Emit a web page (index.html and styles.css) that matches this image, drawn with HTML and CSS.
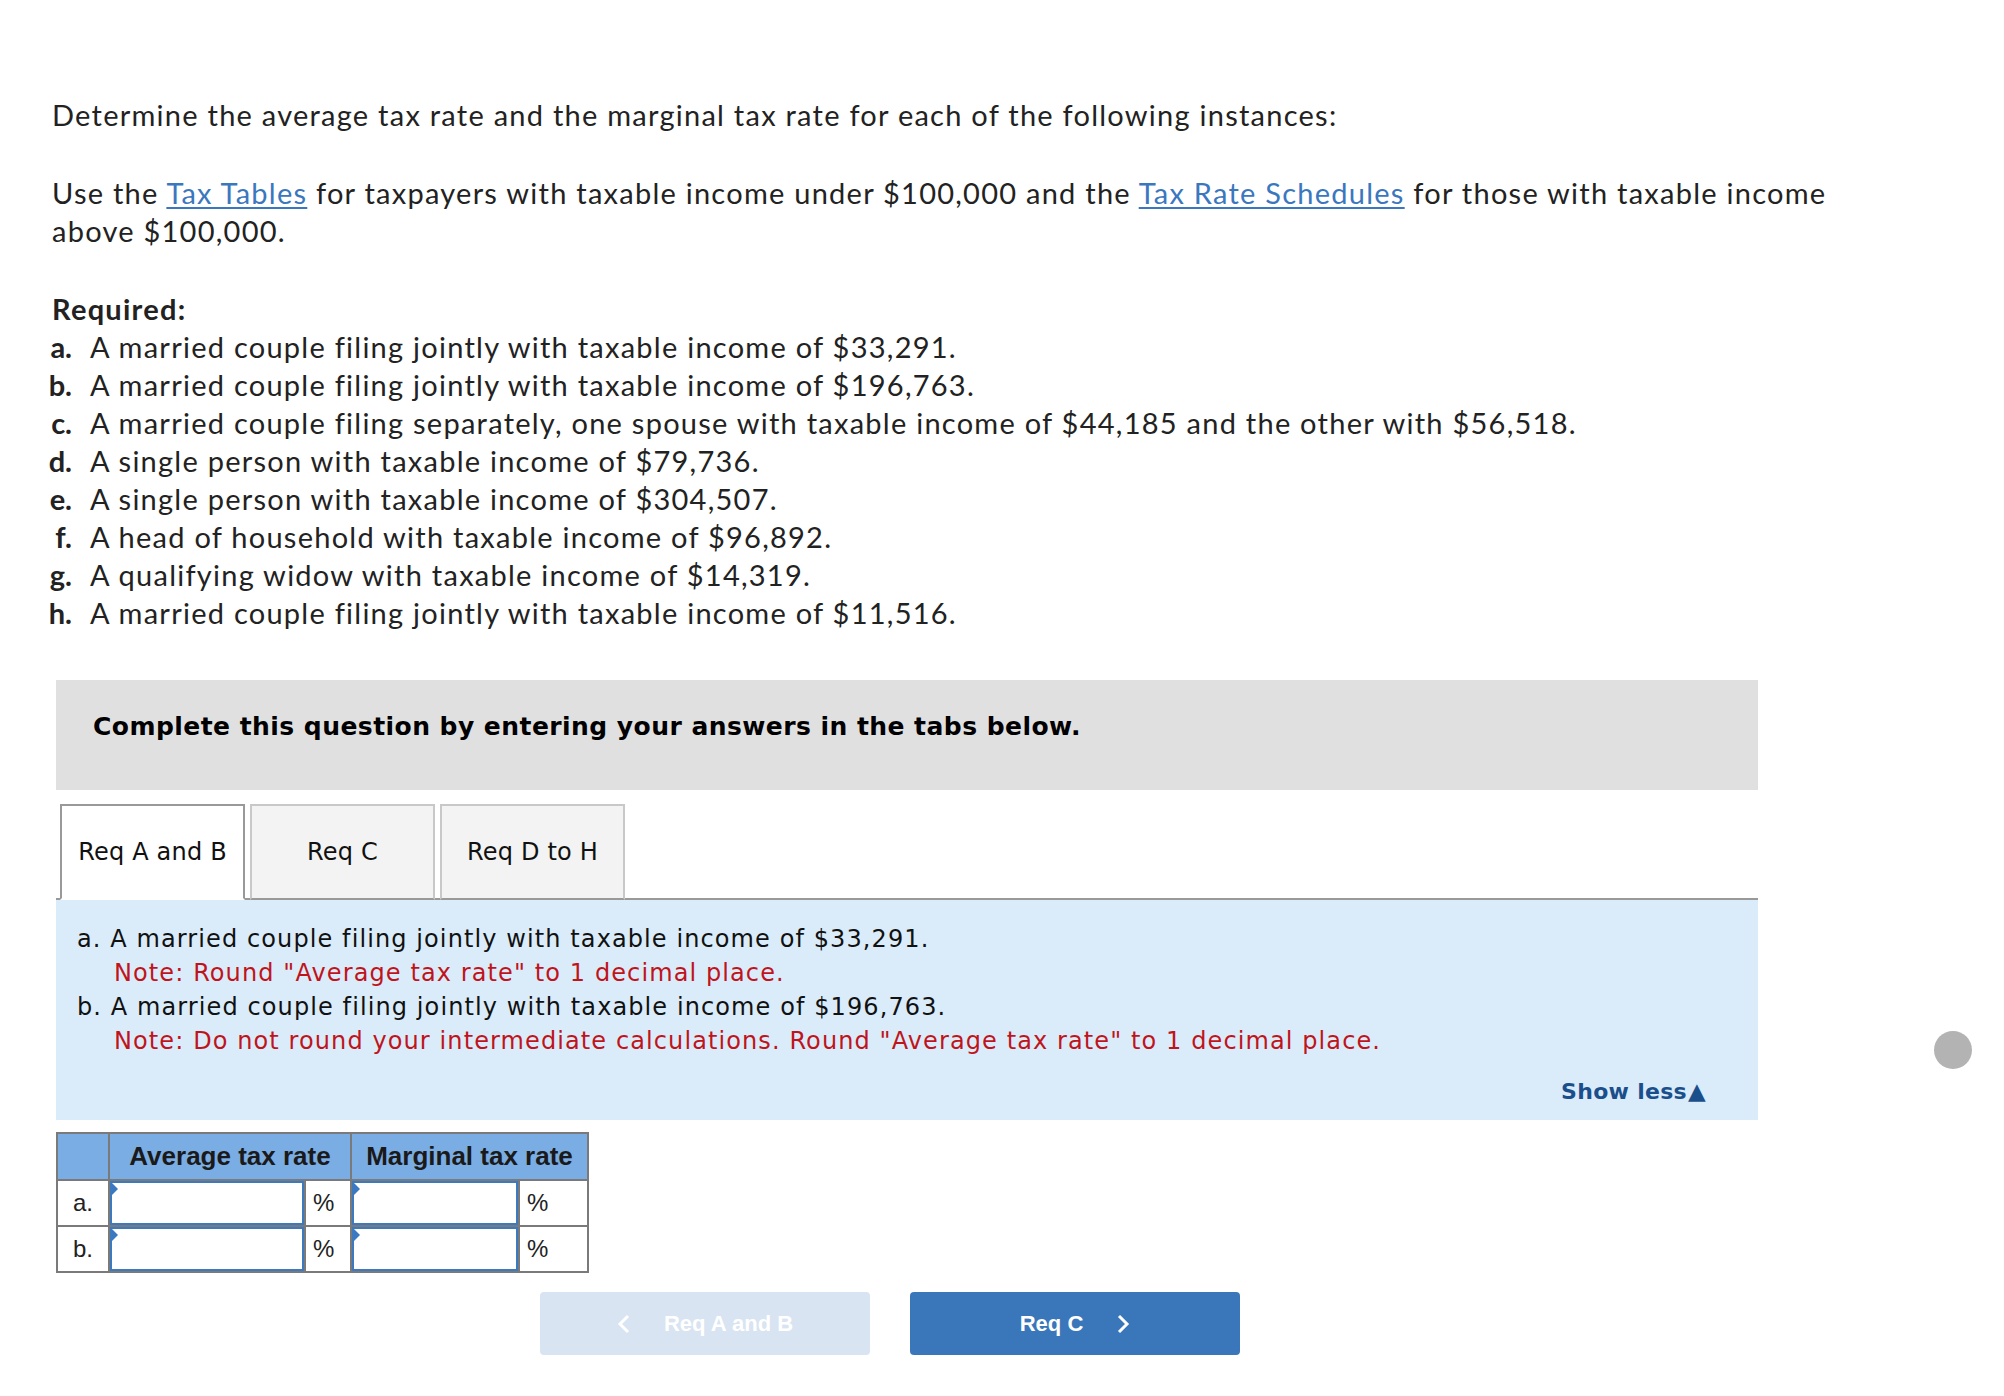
FILE: index.html
```html
<!DOCTYPE html>
<html lang="en">
<head>
<meta charset="utf-8">
<title>Average and marginal tax rate</title>
<link rel="stylesheet" href="styles.css">
</head>
<body>
<main class="page">
  <p class="intro">Determine the average tax rate and the marginal tax rate for each of the following instances:</p>
  <p class="intro"><span>Use the </span><a href="#" class="link">Tax Tables</a><span> for taxpayers with taxable income under $100,000 and the </span><a href="#" class="link">Tax Rate Schedules</a><span> for those with taxable income </span><span>above $100,000.</span></p>
  <div class="required">
    <div class="req-title">Required:</div>
    <ol class="req-list">
      <li><span class="lbl">a.</span><span>A married couple filing jointly with taxable income of $33,291.</span></li>
      <li><span class="lbl">b.</span><span>A married couple filing jointly with taxable income of $196,763.</span></li>
      <li><span class="lbl">c.</span><span>A married couple filing separately, one spouse with taxable income of $44,185 and the other with $56,518.</span></li>
      <li><span class="lbl">d.</span><span>A single person with taxable income of $79,736.</span></li>
      <li><span class="lbl">e.</span><span>A single person with taxable income of $304,507.</span></li>
      <li><span class="lbl">f.</span><span>A head of household with taxable income of $96,892.</span></li>
      <li><span class="lbl">g.</span><span>A qualifying widow with taxable income of $14,319.</span></li>
      <li><span class="lbl">h.</span><span>A married couple filing jointly with taxable income of $11,516.</span></li>
    </ol>
  </div>

  <section class="widget">
    <div class="instructions">Complete this question by entering your answers in the tabs below.</div>
    <div class="tabs">
      <div class="tab active">Req A and B</div>
      <div class="tab">Req C</div>
      <div class="tab">Req D to H</div>
    </div>
    <div class="panel">
      <div class="q">a. A married couple filing jointly with taxable income of $33,291.</div>
      <div class="note">Note: Round "Average tax rate" to 1 decimal place.</div>
      <div class="q">b. A married couple filing jointly with taxable income of $196,763.</div>
      <div class="note">Note: Do not round your intermediate calculations. Round "Average tax rate" to 1 decimal place.</div>
      <div class="show-less">Show less<span class="tri">&#9650;</span></div>
    </div>

    <table class="answers">
      <colgroup>
        <col class="c-lbl"><col class="c-in1"><col class="c-pct1"><col class="c-in2"><col class="c-pct2">
      </colgroup>
      <tr class="head">
        <th></th>
        <th colspan="2">Average tax rate</th>
        <th colspan="2">Marginal tax rate</th>
      </tr>
      <tr>
        <td class="rl">a.</td>
        <td class="inc"><div class="box"><input type="text" class="fld"><span class="flag"></span></div></td>
        <td class="pct">%</td>
        <td class="inc"><div class="box"><input type="text" class="fld"><span class="flag"></span></div></td>
        <td class="pct">%</td>
      </tr>
      <tr>
        <td class="rl">b.</td>
        <td class="inc"><div class="box"><input type="text" class="fld"><span class="flag"></span></div></td>
        <td class="pct">%</td>
        <td class="inc"><div class="box"><input type="text" class="fld"><span class="flag"></span></div></td>
        <td class="pct">%</td>
      </tr>
    </table>

    <div class="nav">
      <button class="nav-btn prev" type="button">
        <svg class="chev" width="14" height="20" viewBox="0 0 14 20"><path d="M11 2 L3 10 L11 18" fill="none" stroke="#fff" stroke-width="3"/></svg>
        <span>Req A and B</span>
      </button>
      <button class="nav-btn next" type="button">
        <span>Req C</span>
        <svg class="chev" width="14" height="20" viewBox="0 0 14 20"><path d="M3 2 L11 10 L3 18" fill="none" stroke="#fff" stroke-width="3"/></svg>
      </button>
    </div>
  </section>
</main>
<div class="scroll-dot"></div>
</body>
</html>
```

FILE: styles.css
```css
html, body {
  margin: 0;
  padding: 0;
  background: #fff;
}

body {
  position: relative;
  width: 2004px;
  min-height: 1396px;
  font-family: "Lato", "Liberation Sans", sans-serif;
  color: #222;
}

.page {
  padding: 96px 0 0 52px;
}

.intro {
  margin: 0 0 40px 0;
  width: 1850px;
  font-size: 29px;
  line-height: 38px;
  letter-spacing: 1.25px;
}

.link {
  color: #3b77be;
  text-decoration: underline;
  text-underline-offset: 3px;
  text-decoration-thickness: 2px;
}

.required {
  font-size: 29px;
  line-height: 38px;
  letter-spacing: 1.25px;
}

.req-title {
  font-weight: 700;
}

.req-list {
  list-style: none;
  margin: 0 0 0 -4px;
  padding: 0;
}

.req-list li {
  display: grid;
  grid-template-columns: 24px 1fr;
  column-gap: 18px;
}

.req-list .lbl {
  font-weight: 700;
  text-align: right;
  letter-spacing: 0;
}

/* widget */
.widget {
  margin: 48px 0 0 4px;
  width: 1702px;
}

.instructions {
  background: #e0e0e0;
  height: 110px;
  box-sizing: border-box;
  padding: 33px 0 0 37px;
  font-family: "DejaVu Sans", Verdana, sans-serif;
  font-weight: 700;
  font-size: 25px;
  letter-spacing: 0.45px;
  line-height: 28px;
  color: #000;
}

.tabs {
  display: flex;
  gap: 5px;
  margin-top: 14px;
  padding-left: 4px;
  border-bottom: 2px solid #999;
  height: 94px;
}

.tab {
  box-sizing: border-box;
  width: 185px;
  height: 96px;
  margin-bottom: -2px;
  border: 2px solid #c8c8c8;
  border-bottom-color: #999;
  background: #f3f3f3;
  display: flex;
  align-items: center;
  justify-content: center;
  font-family: "DejaVu Sans", Verdana, sans-serif;
  font-size: 24px;
  letter-spacing: 0.2px;
  color: #111;
}

.tab.active {
  background: #fff;
  border-color: #999;
  border-bottom-color: #fff;
}

.panel {
  background: #daecf9;
  padding: 22px 52px 15px 21px;
  font-family: "DejaVu Sans", Verdana, sans-serif;
  font-size: 24px;
  letter-spacing: 1.1px;
  line-height: 34px;
  color: #111;
}

.note {
  padding-left: 37px;
  color: #c0141c;
}

.show-less {
  margin-top: 20px;
  text-align: right;
  font-weight: 700;
  font-size: 22px;
  letter-spacing: 0.3px;
  line-height: 26px;
  color: #1b4f8c;
}

.show-less .tri {
  font-size: 23px;
  margin-left: 1px;
}

/* answer table */
.answers {
  margin-top: 12px;
  border-collapse: collapse;
  table-layout: fixed;
  width: 531px;
  font-family: "Liberation Sans", Arial, sans-serif;
  font-size: 24px;
  color: #222;
}

.c-lbl { width: 52px; }
.c-in1 { width: 196px; }
.c-pct1 { width: 46px; }
.c-in2 { width: 168px; }
.c-pct2 { width: 69px; }

.answers th,
.answers td {
  border: 2px solid #7a7a7a;
  padding: 0;
}

.answers tr {
  height: 46px;
}

.answers .head {
  height: 47px;
}

.answers th {
  background: #7aade4;
  font-weight: 700;
  font-size: 26px;
  color: #1a1a1a;
  text-align: center;
}

.answers .rl {
  text-align: center;
}

.answers .pct {
  padding-left: 7px;
}

.answers .inc {
  padding: 0;
}

.box {
  position: relative;
  height: 44px;
}

.fld {
  display: block;
  box-sizing: border-box;
  width: 100%;
  height: 44px;
  margin: 0;
  border: 2px solid #3d79bf;
  background: #fff;
  outline: none;
}

.flag {
  position: absolute;
  left: 2px;
  top: 2px;
  width: 6px;
  height: 12px;
  background: #3a78c2;
  clip-path: polygon(0 0, 100% 50%, 0 100%);
}

/* navigation */
.nav {
  display: flex;
  gap: 40px;
  margin-top: 19px;
  padding-left: 484px;
}

.nav-btn {
  box-sizing: border-box;
  width: 330px;
  height: 63px;
  border: none;
  border-radius: 4px;
  display: flex;
  align-items: center;
  justify-content: center;
  gap: 33px;
  font-family: "Liberation Sans", Arial, sans-serif;
  font-weight: 700;
  font-size: 22px;
  color: #fff;
  padding: 0;
}

.nav-btn.prev {
  background: #d8e4f1;
}

.nav-btn.next {
  background: #3a76ba;
}

.scroll-dot {
  position: absolute;
  left: 1934px;
  top: 1031px;
  width: 38px;
  height: 38px;
  border-radius: 50%;
  background: #b3b3b3;
}
```
